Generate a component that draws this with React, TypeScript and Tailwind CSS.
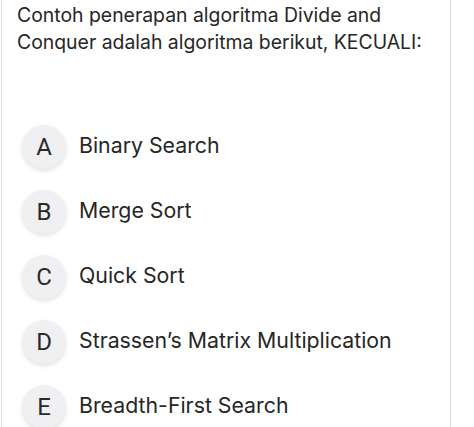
const options = [
  { key: "A", label: "Binary Search" },
  { key: "B", label: "Merge Sort" },
  { key: "C", label: "Quick Sort" },
  { key: "D", label: "Strassen’s Matrix Multiplication" },
  { key: "E", label: "Breadth-First Search" },
];

export default function App() {
  return (
    <div className="w-[474px] h-[427px] bg-white overflow-hidden">
      <div className="ml-px w-[450px] h-full border-x border-[#dedede] pl-[15px] pt-[2px] text-[#262626]">
        <p className="text-[19.4px] leading-[27px] font-['Inter',sans-serif]">
          Contoh penerapan algoritma Divide and
          <br />
          Conquer adalah algoritma berikut, KECUALI:
        </p>
        <div className="mt-[69px] ml-[5px] flex flex-col gap-[21px]">
          {options.map((o) => (
            <div key={o.key} className="flex items-center gap-[13px]">
              <div className="w-[44px] h-[44px] rounded-full bg-[#f0f0f2] shadow-[0_2px_4px_rgba(0,0,0,0.12)] flex items-center justify-center text-[24px] font-['Roboto',sans-serif] text-[#2a2a2a]">
                {o.key}
              </div>
              <span className="text-[21.3px] font-['Inter',sans-serif] -mt-[3px]">{o.label}</span>
            </div>
          ))}
        </div>
      </div>
    </div>
  );
}
